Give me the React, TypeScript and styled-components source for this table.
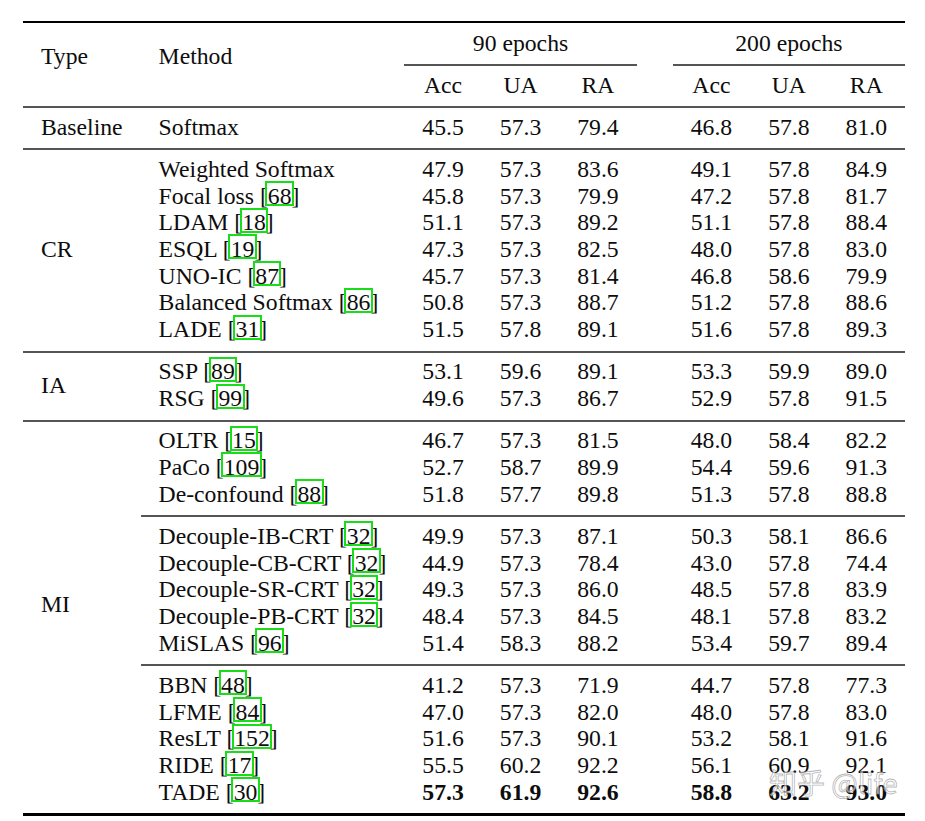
import React from 'react';
import styled, { createGlobalStyle } from 'styled-components';

const GlobalStyle = createGlobalStyle`
  html, body { margin: 0; padding: 0; background: #ffffff; }
`;

const Page = styled.div`
  position: relative;
  padding: 21px 0 0 23px;
  font-family: "Liberation Serif", "Times New Roman", serif;
  font-size: 23.7px;
  color: #0d0d0d;
`;

const Table = styled.table`
  border-collapse: separate;
  border-spacing: 0;
`;

type Align = 'left' | 'center';

const HeadCell = styled.th<{ $top?: boolean; $cmid?: boolean; $pt: number; $pb: number; $align?: Align }>`
  font-weight: normal;
  line-height: 26.68px;
  white-space: nowrap;
  padding: ${p => p.$pt}px 18px ${p => p.$pb}px;
  text-align: ${p => p.$align ?? 'center'};
  vertical-align: middle;
  border-top: ${p => (p.$top ? '2px solid #000' : 'none')};
  border-bottom: ${p => (p.$cmid ? '2px solid #555' : 'none')};
`;

const Cell = styled.td<{
  $first?: boolean;
  $last?: boolean;
  $rule?: boolean;
  $bottom?: boolean;
  $align?: Align;
  $bold?: boolean;
  $shift?: number;
}>`
  line-height: 26.68px;
  white-space: nowrap;
  padding: ${p => (p.$first ? 5.8 : 0)}px 18px ${p => (p.$last ? 7.8 : 0) + (p.$shift ?? 0)}px;
  text-align: ${p => p.$align ?? 'center'};
  font-weight: ${p => (p.$bold ? 'bold' : 'normal')};
  vertical-align: middle;
  border-top: ${p => (p.$rule ? '2px solid #555' : 'none')};
  border-bottom: ${p => (p.$bottom ? '3px solid #000' : 'none')};
`;

const Ref = styled.span`
  position: relative;
  &::after {
    content: '';
    position: absolute;
    left: -2.5px;
    right: -2.5px;
    top: -1.6px;
    bottom: 2.6px;
    border: 2px solid #1add1a;
    pointer-events: none;
  }
`;

const Watermark = styled.div`
  position: absolute;
  left: 769px;
  top: 764px;
  font-family: "Noto Sans CJK SC", "Noto Sans", sans-serif;
  font-size: 28px;
  line-height: 36px;
  white-space: nowrap;
  color: rgba(255, 255, 255, 0.6);
  -webkit-text-stroke: 0.8px rgba(120, 120, 120, 0.55);
  pointer-events: none;
`;

type Row = { name: string; cite?: string; v: string[]; bold?: boolean };
type Section = { type: string; shift?: number; groups: Row[][] };

const sections: Section[] = [
  {
    type: 'Baseline',
    groups: [[{ name: 'Softmax', v: ['45.5', '57.3', '79.4', '46.8', '57.8', '81.0'] }]],
  },
  {
    type: 'CR',
    groups: [
      [
        { name: 'Weighted Softmax', v: ['47.9', '57.3', '83.6', '49.1', '57.8', '84.9'] },
        { name: 'Focal loss', cite: '68', v: ['45.8', '57.3', '79.9', '47.2', '57.8', '81.7'] },
        { name: 'LDAM', cite: '18', v: ['51.1', '57.3', '89.2', '51.1', '57.8', '88.4'] },
        { name: 'ESQL', cite: '19', v: ['47.3', '57.3', '82.5', '48.0', '57.8', '83.0'] },
        { name: 'UNO-IC', cite: '87', v: ['45.7', '57.3', '81.4', '46.8', '58.6', '79.9'] },
        { name: 'Balanced Softmax', cite: '86', v: ['50.8', '57.3', '88.7', '51.2', '57.8', '88.6'] },
        { name: 'LADE', cite: '31', v: ['51.5', '57.8', '89.1', '51.6', '57.8', '89.3'] },
      ],
    ],
  },
  {
    type: 'IA',
    groups: [
      [
        { name: 'SSP', cite: '89', v: ['53.1', '59.6', '89.1', '53.3', '59.9', '89.0'] },
        { name: 'RSG', cite: '99', v: ['49.6', '57.3', '86.7', '52.9', '57.8', '91.5'] },
      ],
    ],
  },
  {
    type: 'MI',
    shift: 25,
    groups: [
      [
        { name: 'OLTR', cite: '15', v: ['46.7', '57.3', '81.5', '48.0', '58.4', '82.2'] },
        { name: 'PaCo', cite: '109', v: ['52.7', '58.7', '89.9', '54.4', '59.6', '91.3'] },
        { name: 'De-confound', cite: '88', v: ['51.8', '57.7', '89.8', '51.3', '57.8', '88.8'] },
      ],
      [
        { name: 'Decouple-IB-CRT', cite: '32', v: ['49.9', '57.3', '87.1', '50.3', '58.1', '86.6'] },
        { name: 'Decouple-CB-CRT', cite: '32', v: ['44.9', '57.3', '78.4', '43.0', '57.8', '74.4'] },
        { name: 'Decouple-SR-CRT', cite: '32', v: ['49.3', '57.3', '86.0', '48.5', '57.8', '83.9'] },
        { name: 'Decouple-PB-CRT', cite: '32', v: ['48.4', '57.3', '84.5', '48.1', '57.8', '83.2'] },
        { name: 'MiSLAS', cite: '96', v: ['51.4', '58.3', '88.2', '53.4', '59.7', '89.4'] },
      ],
      [
        { name: 'BBN', cite: '48', v: ['41.2', '57.3', '71.9', '44.7', '57.8', '77.3'] },
        { name: 'LFME', cite: '84', v: ['47.0', '57.3', '82.0', '48.0', '57.8', '83.0'] },
        { name: 'ResLT', cite: '152', v: ['51.6', '57.3', '90.1', '53.2', '58.1', '91.6'] },
        { name: 'RIDE', cite: '17', v: ['55.5', '60.2', '92.2', '56.1', '60.9', '92.1'] },
        { name: 'TADE', cite: '30', v: ['57.3', '61.9', '92.6', '58.8', '63.2', '93.0'], bold: true },
      ],
    ],
  },
];

const MethodName: React.FC<{ row: Row }> = ({ row }) => (
  <>
    {row.name}
    {row.cite && (
      <>
        {' ['}
        <Ref>{row.cite}</Ref>
        {']'}
      </>
    )}
  </>
);

export default function App() {
  const body: React.ReactNode[] = [];
  sections.forEach((sec, si) => {
    const total = sec.groups.reduce((n, g) => n + g.length, 0);
    const lastSection = si === sections.length - 1;
    sec.groups.forEach((group, gi) => {
      group.forEach((row, ri) => {
        const first = ri === 0;
        const last = ri === group.length - 1;
        const bottom = lastSection && gi === sec.groups.length - 1 && last;
        const common = { $first: first, $last: last, $rule: first, $bottom: bottom };
        body.push(
          <tr key={`${si}-${gi}-${ri}`}>
            {gi === 0 && ri === 0 && (
              <Cell
                rowSpan={total}
                $first
                $last
                $rule
                $bottom={lastSection}
                $align="left"
                $shift={sec.shift}
              >
                {sec.type}
              </Cell>
            )}
            <Cell {...common} $align="left">
              <MethodName row={row} />
            </Cell>
            {row.v.slice(0, 3).map((x, i) => (
              <Cell key={`a${i}`} {...common} $bold={row.bold}>
                {x}
              </Cell>
            ))}
            <Cell {...common} />
            {row.v.slice(3).map((x, i) => (
              <Cell key={`b${i}`} {...common} $bold={row.bold}>
                {x}
              </Cell>
            ))}
          </tr>
        );
      });
    });
  });

  return (
    <>
      <GlobalStyle />
      <Page>
        <Table>
          <thead>
            <tr>
              <HeadCell rowSpan={2} $top $pt={6.7} $pb={23} $align="left">
                Type
              </HeadCell>
              <HeadCell rowSpan={2} $top $pt={6.7} $pb={23} $align="left">
                Method
              </HeadCell>
              <HeadCell colSpan={3} $top $cmid $pt={6.7} $pb={7.6}>
                90 epochs
              </HeadCell>
              <HeadCell rowSpan={2} $top $pt={0} $pb={0} />
              <HeadCell colSpan={3} $top $cmid $pt={6.7} $pb={7.6}>
                200 epochs
              </HeadCell>
            </tr>
            <tr>
              {['Acc', 'UA', 'RA', 'Acc', 'UA', 'RA'].map((h, i) => (
                <HeadCell key={i} $pt={5.7} $pb={7.6}>
                  {h}
                </HeadCell>
              ))}
            </tr>
          </thead>
          <tbody>{body}</tbody>
        </Table>
        <Watermark>知乎 @life</Watermark>
      </Page>
    </>
  );
}
